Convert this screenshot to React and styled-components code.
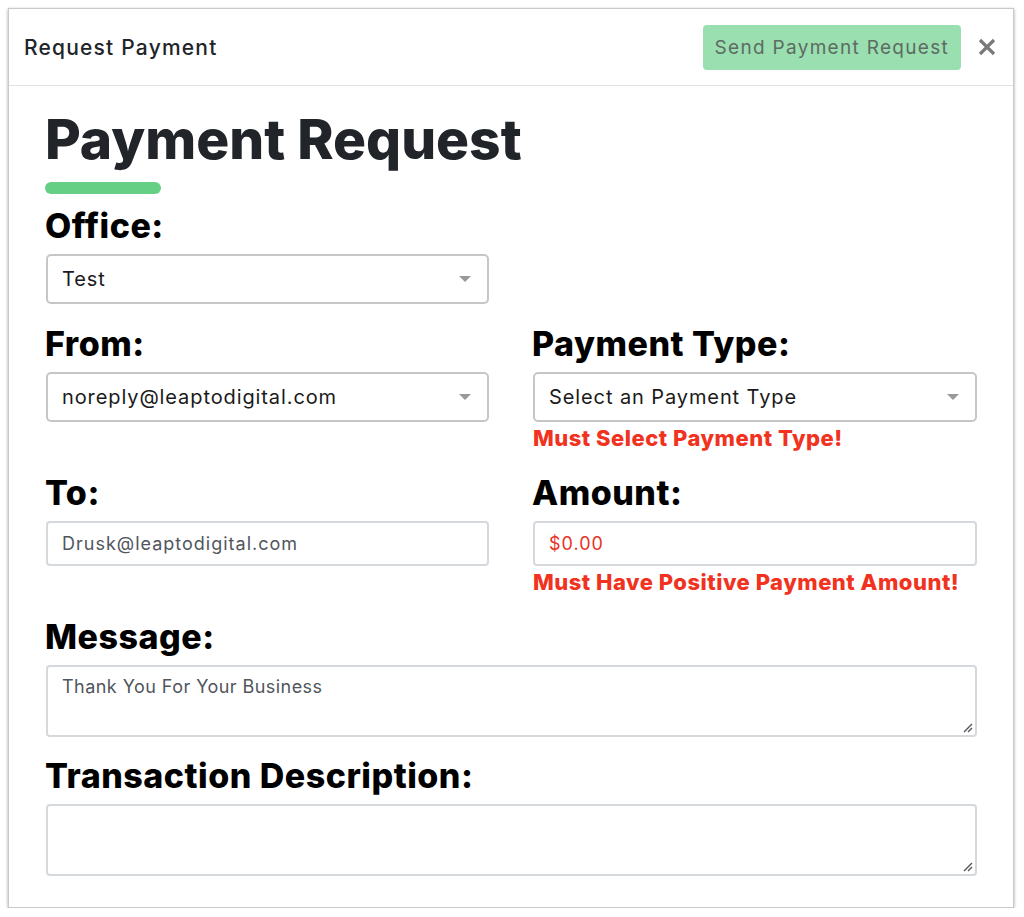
import React from "react";
import styled, { createGlobalStyle } from "styled-components";

const Global = createGlobalStyle`
  html, body { margin: 0; padding: 0; background: #ffffff; }
  body { font-family: Inter, "Open Sans", sans-serif; color: #212529; }
  * { box-sizing: border-box; }
`;

const Modal = styled.div`
  margin: 8px 0 0 8px;
  width: 1006px;
  height: 900px;
  background: #fff;
  border: 1px solid #c9c9c9;
  box-shadow: 0 1px 3px rgba(0,0,0,0.35);
  display: flex;
  flex-direction: column;
`;

const Header = styled.div`
  height: 77px;
  flex: none;
  display: flex;
  align-items: center;
  justify-content: space-between;
  padding: 0 15px 0 15px;
  border-bottom: 1px solid #dee2e6;
`;

const HeaderTitle = styled.div`
  font-size: 21px;
  font-weight: 500;
  color: #212529;
  letter-spacing: 1.2px;
`;

const HeaderActions = styled.div`
  display: flex;
  align-items: center;
  gap: 15px;
`;

const SendButton = styled.button`
  height: 45px;
  padding: 0 12px;
  border: none;
  border-radius: 4px;
  background: #9adfb0;
  color: #5d6b62;
  font-family: inherit;
  font-size: 19px;
  letter-spacing: 1.3px;
`;

const CloseButton = styled.button`
  border: none;
  background: transparent;
  padding: 0;
  width: 22px;
  height: 24px;
  display: flex;
  align-items: center;
  justify-content: center;
`;

const Body = styled.div`
  padding: 20px 36px 0 37px;
`;

const Title = styled.h1`
  margin: 0 0 0 -1px;
  font-size: 55px;
  font-weight: 800;
  line-height: 66px;
  color: #212529;
`;

const Accent = styled.div`
  width: 116px;
  height: 12px;
  border-radius: 6px;
  background: #66cf86;
  margin: 10px 0 12px -1px;
`;

const Grid = styled.div`
  display: grid;
  grid-template-columns: 443px 444px;
  column-gap: 44px;
  align-items: start;
`;

const Field = styled.div`
  display: flex;
  flex-direction: column;
  grid-column: ${(p) => (p.$span ? "1 / -1" : "auto")};
  margin-bottom: ${(p) => p.$mb || 0}px;
`;

const Label = styled.label`
  font-size: 34px;
  font-weight: 800;
  color: #000;
  line-height: 40px;
  letter-spacing: 0.5px;
  margin: 0 0 8px -1px;
`;

const SelectBox = styled.div`
  height: 50px;
  border: 2px solid #c6c6c6;
  border-radius: 5px;
  display: flex;
  align-items: center;
  justify-content: space-between;
  padding: 0 16px 0 14px;
  font-size: 20px;
  letter-spacing: 0.9px;
  color: #1a1a1a;
`;

const Caret = styled.span`
  width: 0;
  height: 0;
  border-left: 6px solid transparent;
  border-right: 6px solid transparent;
  border-top: 6px solid #999;
`;

const TextInput = styled.div`
  height: 45px;
  border: 2px solid #d5d9dd;
  border-radius: 4px;
  display: flex;
  align-items: center;
  padding: 0 14px;
  font-size: 18px;
  letter-spacing: 1px;
  color: ${(p) => p.$color || "#50565c"};
`;

const TextArea = styled.div`
  position: relative;
  height: 72px;
  border: 2px solid #d5d9dd;
  border-radius: 4px;
  padding: 9px 14px;
  font-size: 18px;
  letter-spacing: 0.45px;
  color: #50565c;
`;

const Grip = styled.svg`
  position: absolute;
  right: 2px;
  bottom: 2px;
`;

const ErrorText = styled.div`
  color: #f0321e;
  font-size: 22px;
  font-weight: 800;
  line-height: 26px;
  letter-spacing: 0.5px;
  margin-top: 3px;
`;

const Resize = () => (
  <Grip width="12" height="12" viewBox="0 0 12 12">
    <path d="M11 3 L3 11 M11 7 L7 11" stroke="#555" strokeWidth="1.4" />
  </Grip>
);

export default function App() {
  return (
    <>
      <Global />
      <Modal>
        <Header>
          <HeaderTitle>Request Payment</HeaderTitle>
          <HeaderActions>
            <SendButton>Send Payment Request</SendButton>
            <CloseButton aria-label="close">
              <svg width="20" height="20" viewBox="0 0 20 20">
                <path d="M3 3 L17 17 M17 3 L3 17" stroke="#7a7a7a" strokeWidth="3.2" strokeLinecap="butt" />
              </svg>
            </CloseButton>
          </HeaderActions>
        </Header>
        <Body>
          <Title>Payment Request</Title>
          <Accent />
          <Grid>
            <Field $mb={20}>
              <Label>Office:</Label>
              <SelectBox>Test<Caret /></SelectBox>
            </Field>
            <div />
            <Field $mb={22}>
              <Label>From:</Label>
              <SelectBox>noreply@leaptodigital.com<Caret /></SelectBox>
            </Field>
            <Field $mb={22}>
              <Label>Payment Type:</Label>
              <SelectBox>Select an Payment Type<Caret /></SelectBox>
              <ErrorText>Must Select Payment Type!</ErrorText>
            </Field>
            <Field $mb={22}>
              <Label>To:</Label>
              <TextInput>Drusk@leaptodigital.com</TextInput>
            </Field>
            <Field $mb={22}>
              <Label>Amount:</Label>
              <TextInput $color="#e8331f">$0.00</TextInput>
              <ErrorText>Must Have Positive Payment Amount!</ErrorText>
            </Field>
            <Field $span $mb={19}>
              <Label>Message:</Label>
              <TextArea>Thank You For Your Business<Resize /></TextArea>
            </Field>
            <Field $span>
              <Label>Transaction Description:</Label>
              <TextArea><Resize /></TextArea>
            </Field>
          </Grid>
        </Body>
      </Modal>
    </>
  );
}
